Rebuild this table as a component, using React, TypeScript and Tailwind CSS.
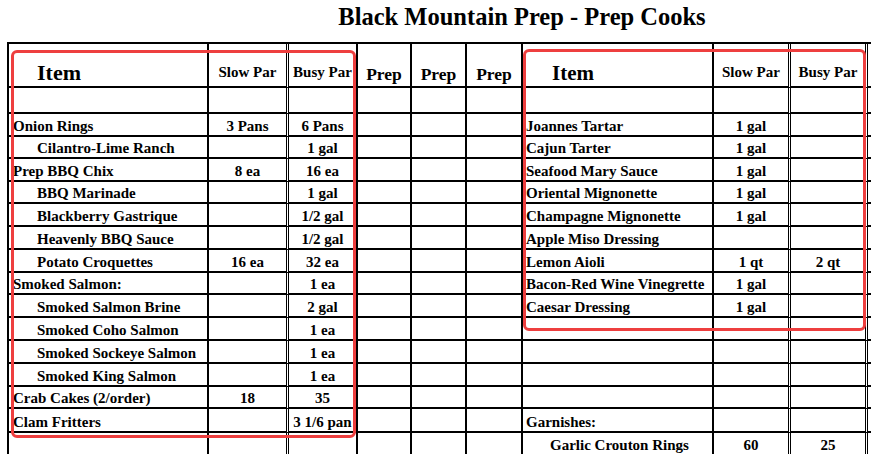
import React from "react";

type Row = { name: string; indent?: boolean; slow?: string; busy?: string };

const leftRows: Row[] = [
  { name: "Onion Rings", slow: "3 Pans", busy: "6 Pans" },
  { name: "Cilantro-Lime Ranch", indent: true, busy: "1 gal" },
  { name: "Prep BBQ Chix", slow: "8 ea", busy: "16 ea" },
  { name: "BBQ Marinade", indent: true, busy: "1 gal" },
  { name: "Blackberry Gastrique", indent: true, busy: "1/2 gal" },
  { name: "Heavenly BBQ Sauce", indent: true, busy: "1/2 gal" },
  { name: "Potato Croquettes", indent: true, slow: "16 ea", busy: "32 ea" },
  { name: "Smoked Salmon:", busy: "1 ea" },
  { name: "Smoked Salmon Brine", indent: true, busy: "2 gal" },
  { name: "Smoked Coho Salmon", indent: true, busy: "1 ea" },
  { name: "Smoked Sockeye Salmon", indent: true, busy: "1 ea" },
  { name: "Smoked King Salmon", indent: true, busy: "1 ea" },
  { name: "Crab Cakes (2/order)", slow: "18", busy: "35" },
  { name: "Clam Fritters", busy: "3 1/6 pan" },
  { name: "" },
];

const rightRows: Row[] = [
  { name: "Joannes Tartar", slow: "1 gal" },
  { name: "Cajun Tarter", slow: "1 gal" },
  { name: "Seafood Mary Sauce", slow: "1 gal" },
  { name: "Oriental Mignonette", slow: "1 gal" },
  { name: "Champagne Mignonette", slow: "1 gal" },
  { name: "Apple Miso Dressing" },
  { name: "Lemon Aioli", slow: "1 qt", busy: "2 qt" },
  { name: "Bacon-Red Wine Vinegrette", slow: "1 gal" },
  { name: "Caesar Dressing", slow: "1 gal" },
  { name: "" },
  { name: "" },
  { name: "" },
  { name: "" },
  { name: "Garnishes:" },
  { name: "Garlic Crouton Rings", indent: true, slow: "60", busy: "25" },
];

const rowH = [
  "h-[23px]",
  "h-[22px]",
  "h-[23px]",
  "h-[22px]",
  "h-[23px]",
  "h-[23px]",
  "h-[23px]",
  "h-[22px]",
  "h-[23px]",
  "h-[23px]",
  "h-[23px]",
  "h-[23px]",
  "h-[22px]",
  "h-[24px]",
  "h-[23px]",
];

const colW = [
  "w-[200px]",
  "w-[80px]",
  "w-[69px]",
  "w-[54px]",
  "w-[55px]",
  "w-[56px]",
  "w-[191px]",
  "w-[77px]",
  "w-[77px]",
  "w-[100px]",
];
const dbl = [false, true, false, false, false, false, false, true, true, false];

function Cell({
  i,
  className = "",
  children,
}: {
  i: number;
  className?: string;
  children?: React.ReactNode;
}) {
  return (
    <div
      className={`shrink-0 flex border-b-2 border-black ${colW[i]} ${
        dbl[i] ? "border-r-[3px] [border-right-style:double]" : "border-r-2"
      } ${className}`}
    >
      {children}
    </div>
  );
}

const dataText = "items-end pb-px text-[15px] leading-[15px] font-bold whitespace-nowrap";

export default function App() {
  return (
    <div className="relative w-[871px] h-[454px] overflow-hidden bg-white text-black font-['Liberation_Serif',serif]">
      <div className="w-[1044px] h-[42px] pt-[5px] text-center text-[24.5px] leading-none font-bold">
        Black Mountain Prep - Prep Cooks
      </div>
      <div className="ml-[7px] w-max border-l-2 border-t-2 border-black">
        {/* header */}
        <div className="flex h-[44px]">
          <Cell i={0} className="items-end pb-[2px] pl-[28px] text-[22px] leading-none font-bold">
            Item
          </Cell>
          <Cell i={1} className="items-end justify-center pb-[6px] text-[15px] leading-none font-bold">
            Slow Par
          </Cell>
          <Cell i={2} className="items-end justify-center pb-[6px] text-[15px] leading-none font-bold">
            Busy Par
          </Cell>
          <Cell i={3} className="items-end justify-center pb-[3px] text-[17.5px] leading-none font-bold">
            Prep
          </Cell>
          <Cell i={4} className="items-end justify-center pb-[3px] text-[17.5px] leading-none font-bold">
            Prep
          </Cell>
          <Cell i={5} className="items-end justify-center pb-[3px] text-[17.5px] leading-none font-bold">
            Prep
          </Cell>
          <Cell i={6} className="items-end pb-[2px] pl-[29px] text-[21px] leading-none font-bold">
            Item
          </Cell>
          <Cell i={7} className="items-end justify-center pb-[6px] text-[15px] leading-none font-bold">
            Slow Par
          </Cell>
          <Cell i={8} className="items-end justify-center pb-[6px] text-[15px] leading-none font-bold">
            Busy Par
          </Cell>
          <Cell i={9} />
        </div>
        {/* blank row */}
        <div className="flex h-[26px]">
          {colW.map((_, i) => (
            <Cell key={i} i={i} />
          ))}
        </div>
        {leftRows.map((l, r) => {
          const rr = rightRows[r];
          return (
            <div key={r} className={`flex ${rowH[r]}`}>
              <Cell i={0} className={`${dataText} ${l.indent ? "pl-[28px]" : "pl-[4px]"}`}>
                {l.name}
              </Cell>
              <Cell i={1} className={`${dataText} justify-center`}>
                {l.slow}
              </Cell>
              <Cell i={2} className={`${dataText} justify-center`}>
                {l.busy}
              </Cell>
              <Cell i={3} />
              <Cell i={4} />
              <Cell i={5} />
              <Cell i={6} className={`${dataText} ${rr.indent ? "pl-[27px]" : "pl-[3px]"}`}>
                {rr.name}
              </Cell>
              <Cell i={7} className={`${dataText} justify-center`}>
                {rr.slow}
              </Cell>
              <Cell i={8} className={`${dataText} justify-center`}>
                {rr.busy}
              </Cell>
              <Cell i={9} />
            </div>
          );
        })}
      </div>
      {/* annotation boxes */}
      <div className="absolute left-[11px] top-[50px] w-[345px] h-[388px] border-[3px] border-[#ee3f3f] rounded-[6px] pointer-events-none" />
      <div className="absolute left-[523px] top-[49px] w-[343px] h-[282px] border-[3px] border-[#ee3f3f] rounded-[6px] pointer-events-none" />
    </div>
  );
}
